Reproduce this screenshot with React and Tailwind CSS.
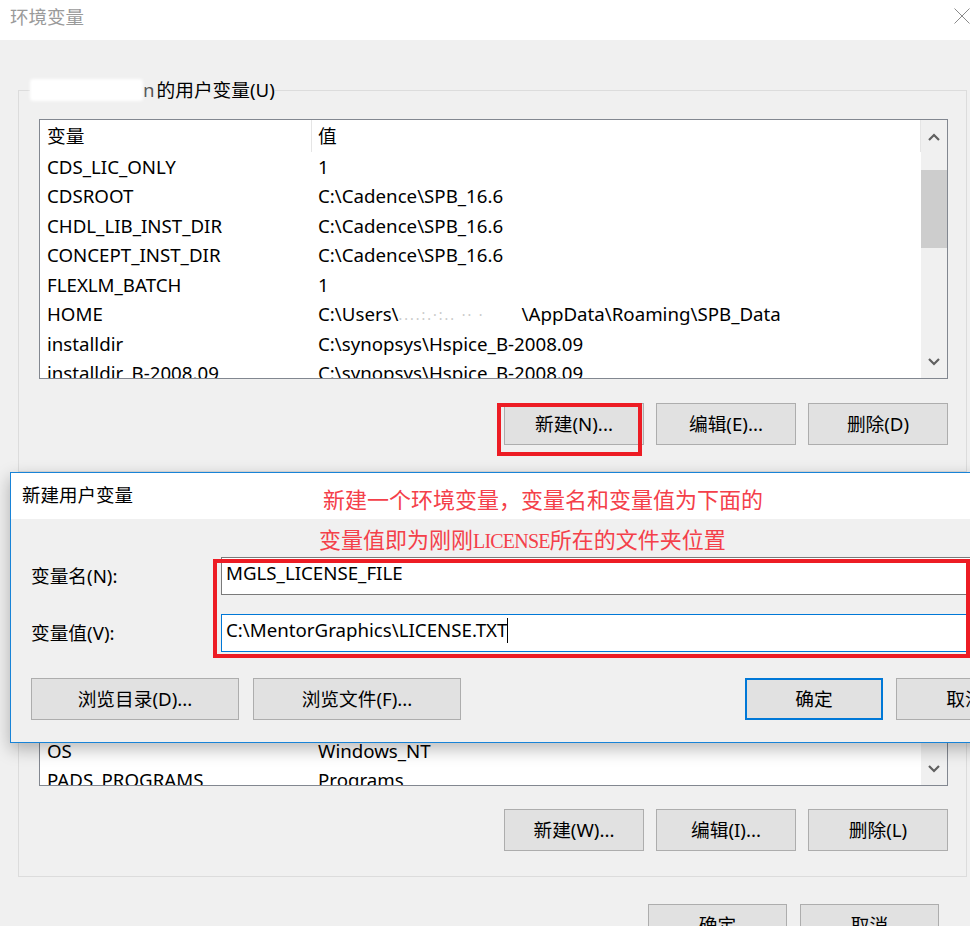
import React from "react";

function ChevronUp() {
  return (
    <svg width="12" height="8" viewBox="0 0 12 8">
      <path d="M1 7 L6 2 L11 7" fill="none" stroke="#606060" strokeWidth="2.2" />
    </svg>
  );
}

function ChevronDown() {
  return (
    <svg width="12" height="8" viewBox="0 0 12 8">
      <path d="M1 1 L6 6 L11 1" fill="none" stroke="#606060" strokeWidth="2.2" />
    </svg>
  );
}

function Scrollbar({ thumbTop }) {
  return (
    <div className="w-[26px] shrink-0 bg-[#f0f0f0] flex flex-col">
      <div className="h-[34px] shrink-0 flex items-center justify-center">
        <ChevronUp />
      </div>
      <div className="flex-1 flex flex-col">
        <div className={thumbTop}></div>
        <div className="h-[78px] bg-[#cdcdcd]"></div>
      </div>
      <div className="h-[32px] shrink-0 flex items-center justify-center">
        <ChevronDown />
      </div>
    </div>
  );
}

function VarList({ rows, thumbTop }) {
  return (
    <div className="h-[260px] border border-[#828790] bg-white flex overflow-hidden">
      <div className="flex-1 flex flex-col overflow-hidden">
        <div className="h-[32px] shrink-0 flex">
          <div className="w-[272px] shrink-0 flex items-center pl-[7px] border-r border-[#e5e5e5]">变量</div>
          <div className="flex-1 flex items-center pl-[6px] border-r border-[#e5e5e5]">值</div>
        </div>
        {rows.map(([k, v], i) => (
          <div key={i} className="h-[29.5px] shrink-0 flex items-center whitespace-nowrap">
            <div className="w-[271px] shrink-0 pl-[7px]">{k}</div>
            <div className="pl-[7px]">{v}</div>
          </div>
        ))}
      </div>
      <Scrollbar thumbTop={thumbTop} />
    </div>
  );
}

function Btn({ children, className, primary }) {
  return (
    <div
      className={
        (primary ? "border-2 border-[#0078d7] " : "border border-[#adadad] ") +
        "h-[42px] shrink-0 bg-[#e1e1e1] flex items-center justify-center " +
        className
      }
    >
      {children}
    </div>
  );
}

const homeValue = (
  <span className="inline-flex items-center">
    <span>C:\Users\</span>
    <span className="inline-block w-[123px] text-[#c9c9c9] text-[14px] tracking-[2px]">....:.·:..  ·· ·</span>
    <span>\AppData\Roaming\SPB_Data</span>
  </span>
);

const userRows = [
  ["CDS_LIC_ONLY", "1"],
  ["CDSROOT", "C:\\Cadence\\SPB_16.6"],
  ["CHDL_LIB_INST_DIR", "C:\\Cadence\\SPB_16.6"],
  ["CONCEPT_INST_DIR", "C:\\Cadence\\SPB_16.6"],
  ["FLEXLM_BATCH", "1"],
  ["HOME", homeValue],
  ["installdir", "C:\\synopsys\\Hspice_B-2008.09"],
  ["installdir_B-2008.09", "C:\\synopsys\\Hspice_B-2008.09"],
  ["LM_LICENSE_FILE", "C:\\Cadence\\SPB_16.6\\share\\license\\license.dat"],
];

const sysRows = [
  ["ComSpec", "C:\\WINDOWS\\system32\\cmd.exe"],
  ["DriverData", "C:\\Windows\\System32\\Drivers\\DriverData"],
  ["JAVA_HOME", "C:\\Program Files\\Java\\jdk1.8.0"],
  ["MGC_HOME", "C:\\MentorGraphics\\PADSVX.2.2_MGC"],
  ["NUMBER_OF_PROCESSORS", "8"],
  ["OneDrive", "C:\\Users\\Public\\OneDrive"],
  ["OS", "Windows_NT"],
  ["PADS_PROGRAMS", "Programs"],
  ["Path", "C:\\Program Files (x86)\\Common Files\\Oracle\\Java"],
];

export default function App() {
  return (
    <div className="w-[970px] h-[926px] overflow-hidden relative bg-[#f0f0f0] text-black text-[18.7px] font-['Noto_Sans','Noto_Sans_CJK_SC',sans-serif]">
      {/* title bar */}
      <div className="h-[40px] bg-white flex justify-between">
        <div className="pl-[10px] pt-[4px] leading-[26px] text-[#9a9a9a] text-[18.5px]">环境变量</div>
        <svg className="mt-[8px]" width="16" height="16" viewBox="0 0 16 16">
          <path d="M0.5 0.5 L15.5 15.5 M15.5 0.5 L0.5 15.5" stroke="#8a8a8a" strokeWidth="1" />
        </svg>
      </div>

      {/* body */}
      <div className="pl-[18px] pr-[3px] pt-[37px] flex flex-col">
        <fieldset className="w-[949px] border border-[#dcdcdc] pl-[20px] pr-[18px] pt-[16px] pb-[26px]">
          <legend className="ml-[-9px] px-0 leading-[26px] flex items-center">
            <span className="inline-block w-[113px] h-[22px] bg-white blur-[1.5px] rounded-[3px]"></span>
            <span className="text-[#555]">n</span>
            <span className="ml-[2px]">的用户变量(U)</span>
          </legend>
          <VarList rows={userRows} thumbTop="h-[16px]" />
          <div className="mt-[24px] flex justify-end gap-[12px]">
            <Btn className="w-[140px]">新建(N)...</Btn>
            <Btn className="w-[140px]">编辑(E)...</Btn>
            <Btn className="w-[140px]">删除(D)</Btn>
          </div>
        </fieldset>

        <fieldset className="mt-[12px] w-[949px] border border-[#dcdcdc] pl-[20px] pr-[18px] pt-[16px] pb-[25px]">
          <legend className="ml-[-9px] px-[2px] leading-[26px]">系统变量(S)</legend>
          <VarList rows={sysRows} thumbTop="h-[40px]" />
          <div className="mt-[23px] flex justify-end gap-[12px]">
            <Btn className="w-[140px]">新建(W)...</Btn>
            <Btn className="w-[140px]">编辑(I)...</Btn>
            <Btn className="w-[140px]">删除(L)</Btn>
          </div>
        </fieldset>

        <div className="mt-[27px] pr-[28px] flex justify-end gap-[13px]">
          <Btn className="w-[139px]">确定</Btn>
          <Btn className="w-[139px]">取消</Btn>
        </div>
      </div>

      {/* new user variable dialog */}
      <div className="absolute left-[10px] top-[472px] w-[1045px] h-[271px] border border-[#1883d7] bg-[#f0f0f0] shadow-[0_6px_16px_rgba(0,0,0,0.28)] flex flex-col">
        <div className="h-[46px] shrink-0 bg-white flex items-center pl-[11px] pb-[2px] text-[18.5px]">新建用户变量</div>
        <div className="flex-1 flex flex-col pt-[38px] pl-[20px] pr-[20px]">
          <div className="flex items-center">
            <div className="w-[190px] shrink-0">变量名(N):</div>
            <div className="flex-1 h-[38px] bg-white border border-[#7a7a7a] pl-[4px] pt-[2px] leading-[26px] whitespace-nowrap">
              MGLS_LICENSE_FILE
            </div>
          </div>
          <div className="mt-[19px] flex items-center">
            <div className="w-[190px] shrink-0">变量值(V):</div>
            <div className="flex-1 h-[38px] bg-white border border-[#0078d7] pl-[4px] pt-[2px] leading-[26px] whitespace-nowrap flex items-start">
              <span>C:\MentorGraphics\LICENSE.TXT</span>
              <span className="inline-block w-[1px] h-[25px] bg-black mt-[1px]"></span>
            </div>
          </div>
          <div className="mt-[26px] flex">
            <Btn className="w-[208px]">浏览目录(D)...</Btn>
            <Btn className="w-[208px] ml-[14px]">浏览文件(F)...</Btn>
            <Btn primary className="w-[138px] ml-auto">确定</Btn>
            <Btn className="w-[138px] ml-[13px]">取消</Btn>
          </div>
        </div>

        {/* annotations */}
        <div className="absolute left-[312px] top-[12px] text-[22px] leading-[26px] text-[#f4404a] whitespace-nowrap font-['Noto_Sans_CJK_SC',sans-serif]">
          新建一个环境变量，变量名和变量值为下面的
        </div>
        <div className="absolute left-[308px] top-[52px] text-[22px] leading-[26px] text-[#f4404a] whitespace-nowrap font-['Noto_Sans_CJK_SC',sans-serif]">
          变量值即为刚刚<span className="font-['Liberation_Serif',serif] text-[20px] tracking-[-0.8px]">LICENSE</span>所在的文件夹位置
        </div>
      </div>

      {/* red highlight boxes */}
      <div className="absolute left-[497px] top-[403px] w-[145px] h-[53px] border-[4px] border-[#ed1c24]"></div>
      <div className="absolute left-[213px] top-[559px] w-[757px] h-[99px] border-[4px] border-[#ed1c24]"></div>
    </div>
  );
}
